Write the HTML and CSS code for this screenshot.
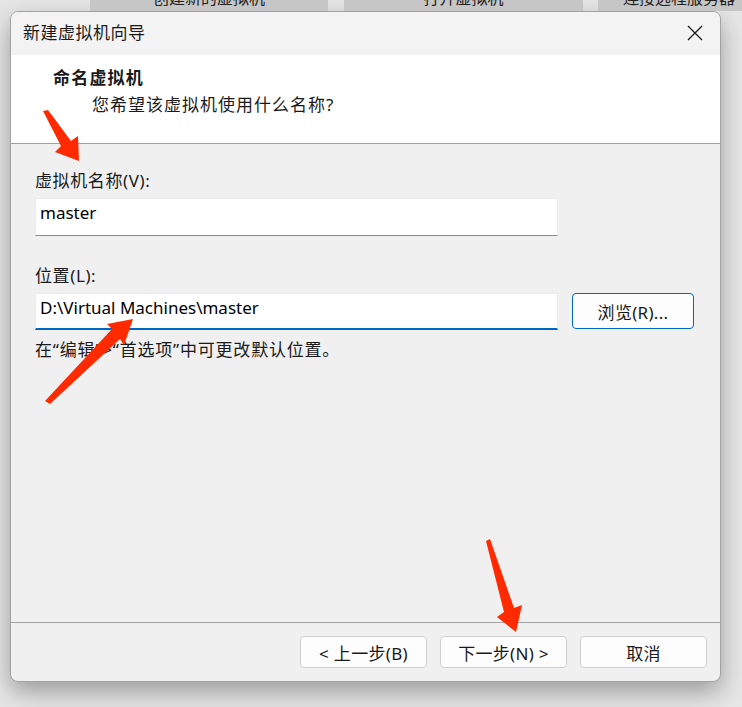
FILE: index.html
```html
<!DOCTYPE html>
<html lang="zh-CN">
<head>
<meta charset="utf-8">
<title>新建虚拟机向导</title>
<link rel="stylesheet" href="styles.css">
</head>
<body>
<div class="tabs">
  <div class="tab t1"><span>创建新的虚拟机</span></div>
  <div class="tab t2"><span>打开虚拟机</span></div>
  <div class="tab t3"><span>连接远程服务器</span></div>
</div>
<div class="window">
  <div class="titlebar">
    <span class="title">新建虚拟机向导</span>
    <svg class="close" width="18" height="18" viewBox="0 0 18 18"><path d="M2 2 L16 16 M16 2 L2 16" stroke="#1a1a1a" stroke-width="1.3" fill="none"/></svg>
  </div>
  <div class="header">
    <div class="h-title">命名虚拟机</div>
    <div class="h-sub">您希望该虚拟机使用什么名称?</div>
  </div>
  <div class="body">
    <div class="label l1">虚拟机名称(V):</div>
    <div class="input">master</div>
    <div class="label l2">位置(L):</div>
    <div class="row">
      <div class="input focused">D:\Virtual Machines\master</div>
      <div class="btn browse">浏览(R)...</div>
    </div>
    <div class="hint">在“编辑”&gt;“首选项”中可更改默认位置。</div>
  </div>
  <div class="footer">
    <div class="btn">&lt; 上一步(B)</div>
    <div class="btn">下一步(N) &gt;</div>
    <div class="btn">取消</div>
  </div>
</div>
<svg class="arrows" width="742" height="707" viewBox="0 0 742 707">
  <polygon fill="#ff2a00" points="43,111 48,110 71,141 78,136 79,161 55,152 61,146"/>
  <polygon fill="#ff2a00" points="45,401 112,329 107,324 133,319 124,345 120,339 50,404"/>
  <polygon fill="#ff2a00" points="486,541 490,539 514,608 522,605 516,632 497,617 504,612"/>
</svg>
</body>
</html>
```
FILE: styles.css
```css
html, body {
  margin: 0;
  padding: 0;
}
body {
  width: 742px;
  height: 707px;
  overflow: hidden;
  background: #e6e6e6;
  font-family: "Noto Sans", "Noto Sans CJK SC", sans-serif;
  color: #1a1a1a;
  position: relative;
}
.tabs {
  height: 11px;
  display: flex;
  overflow: hidden;
}
.tab {
  flex-shrink: 0;
  height: 11px;
  background: #c6c6c6;
  overflow: hidden;
  text-align: center;
  font-size: 16px;
  line-height: 16px;
  color: #222;
}
.tab span {
  display: block;
  margin-top: -10px;
}
.t1 { margin-left: 90px; width: 238px; }
.t2 { margin-left: 16px; width: 239px; }
.t3 { margin-left: 15px; width: 144px; text-align: left; padding-left: 25px; }

.window {
  margin-left: 10px;
  width: 709px;
  height: 669px;
  border: 1px solid #a3a3a3;
  border-radius: 8px;
  background: #f0f0f0;
  overflow: hidden;
  display: flex;
  flex-direction: column;
  box-shadow: 0 10px 24px rgba(0,0,0,0.32);
}
.titlebar {
  height: 43px;
  box-sizing: border-box;
  background: #f3f3f3;
  display: flex;
  align-items: center;
  justify-content: space-between;
  padding: 0 16px 4px 12px;
}
.title {
  font-size: 17px;
  color: #1a1a1a;
  letter-spacing: 0.5px;
}
.close {
  display: block;
  margin-top: 3px;
}
.header {
  height: 88px;
  background: #ffffff;
  border-bottom: 1px solid #a0a0a0;
  padding-left: 42px;
  box-sizing: content-box;
}
.h-title {
  margin-top: 11px;
  font-size: 17px;
  font-weight: bold;
  line-height: 24px;
  letter-spacing: 1.2px;
}
.h-sub {
  margin-top: 3px;
  margin-left: 39px;
  font-size: 17px;
  line-height: 24px;
  letter-spacing: 1px;
}
.body {
  flex: 1;
  padding: 0 24px;
  border-bottom: 1px solid #a0a0a0;
}
.label {
  font-size: 17px;
  line-height: 24px;
  letter-spacing: 0.6px;
}
.l1 { margin-top: 25px; margin-bottom: 5px; }
.l2 { margin-top: 28px; margin-bottom: 5px; }
.input {
  width: 523px;
  height: 38px;
  box-sizing: border-box;
  background: #fff;
  border: 1px solid #ececec;
  border-bottom: 1px solid #8a8a8a;
  padding: 2px 4px 0;
  font-size: 17px;
  line-height: 24px;
  color: #000;
}
.input.focused {
  height: 37px;
  border-bottom: 2px solid #0067c0;
}
.row {
  display: flex;
  align-items: flex-start;
  gap: 14px;
}
.btn {
  width: 127px;
  height: 32px;
  box-sizing: border-box;
  border: 1px solid #d0d0d0;
  border-radius: 4px;
  background: #fdfdfd;
  display: flex;
  align-items: center;
  justify-content: center;
  font-size: 17px;
  color: #1a1a1a;
  letter-spacing: 0.3px;
}
.btn.browse {
  width: 122px;
  height: 36px;
  border-color: #0067c0;
}
.hint {
  margin-top: 8px;
  font-size: 17px;
  line-height: 24px;
  letter-spacing: 0.8px;
  color: #1a1a1a;
}
.footer {
  height: 58px;
  display: flex;
  justify-content: flex-end;
  align-items: flex-start;
  padding: 13px 13px 0 0;
  box-sizing: border-box;
  gap: 13px;
}
.arrows {
  position: absolute;
  left: 0;
  top: 0;
  pointer-events: none;
}
```
